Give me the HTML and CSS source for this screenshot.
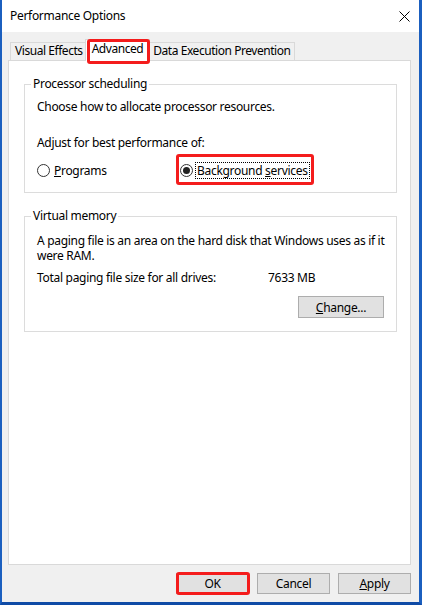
FILE: index.html
```html
<!DOCTYPE html>
<html>
<head>
<meta charset="utf-8">
<title>Performance Options</title>
<link rel="stylesheet" href="styles.css">
</head>
<body>
<div class="window">
  <div class="titlebar">
    <span class="title">Performance Options</span>
    <span class="close"><svg width="11" height="11" viewBox="0 0 11 11"><path d="M0.5 0.5L10.5 10.5M10.5 0.5L0.5 10.5" stroke="#000" stroke-width="1" fill="none"/></svg></span>
  </div>
  <div class="body">
    <div class="tabs">
      <div class="tab">Visual Effects</div>
      <div class="tab selected">Advanced<span class="mark mark-tab"></span></div>
      <div class="tab">Data Execution Prevention</div>
    </div>
    <div class="panel">
      <fieldset class="group g1">
        <legend>Processor scheduling</legend>
        <p class="line">Choose how to allocate processor resources.</p>
        <p class="line adjust">Adjust for best performance of:</p>
        <div class="radios">
          <div class="radio r-prog"><span class="circle"></span><span class="lbl"><u>P</u>rograms</span></div>
          <div class="radio r-bg"><span class="circle checked"></span><span class="lbl focus">Background <u>s</u>ervices</span><span class="mark mark-bg"></span></div>
        </div>
      </fieldset>
      <fieldset class="group g2">
        <legend>Virtual memory</legend>
        <p class="line">A paging file is an area on the hard disk that Windows uses as if it<br>were RAM.</p>
        <div class="total"><span class="total-label">Total paging file size for all drives:</span><span class="total-value">7633 MB</span></div>
        <div class="change-row"><button class="btn change"><u>C</u>hange...</button></div>
      </fieldset>
    </div>
    <div class="footer">
      <button class="btn ok">OK<span class="mark mark-ok"></span></button>
      <button class="btn">Cancel</button>
      <button class="btn"><u>A</u>pply</button>
    </div>
  </div>
</div>
</body>
</html>
```
FILE: styles.css
```css
html, body {
  margin: 0;
  padding: 0;
}
body {
  font-family: "Noto Sans", "Open Sans", sans-serif;
  font-size: 12px;
  letter-spacing: -0.3px;
  color: #000;
  background: #1b5fbf;
}
.window {
  width: 422px;
  height: 605px;
  box-sizing: border-box;
  border-left: 2px solid #1b5fbf;
  border-right: 3px solid #1b5fbf;
  border-bottom: 3px solid #0f4ba6;
  display: flex;
  flex-direction: column;
  background: #f0f0f0;
}
.titlebar {
  height: 32px;
  flex: none;
  background: #fff;
  display: flex;
  align-items: center;
  justify-content: space-between;
  padding: 0 9px 0 8px;
}
.title {
  line-height: 16px;
}
.close svg {
  display: block;
}
.body {
  flex: 1;
  display: flex;
  flex-direction: column;
  padding: 7px 8px 0 6px;
  min-height: 0;
}
.tabs {
  height: 21px;
  flex: none;
  display: flex;
  align-items: flex-end;
  padding-left: 2px;
  position: relative;
  z-index: 1;
}
.tab {
  height: 18px;
  box-sizing: border-box;
  border: 1px solid #d9d9d9;
  border-bottom: none;
  padding: 0 3px 0 4px;
  line-height: 16px;
  background: #f0f0f0;
  white-space: nowrap;
  letter-spacing: -0.45px;
}
.tab.selected {
  height: 22px;
  margin: 0 -2px -1px;
  padding: 0 6px;
  line-height: 18px;
  background: #fff;
  position: relative;
  z-index: 2;
}
.mark {
  position: absolute;
  box-sizing: border-box;
  border: 3px solid #f41c1c;
  border-radius: 3px;
  pointer-events: none;
}
.mark-tab {
  left: 1px;
  top: -1px;
  right: -1px;
  height: 25px;
}
.panel {
  flex: 1;
  background: #fff;
  border: 1px solid #d9d9d9;
  padding: 15px 0 0 15px;
  display: flex;
  flex-direction: column;
  min-height: 0;
}
.group {
  margin: 0;
  width: 373px;
  box-sizing: border-box;
  border: 1px solid #dcdcdc;
  padding: 7px 12px 11px 12px;
  min-width: 0;
}
.group legend {
  padding: 0 2px;
  margin-left: -6px;
  line-height: 16px;
}
.line {
  margin: 0;
  line-height: 15px;
  white-space: nowrap;
}
.adjust {
  margin-top: 21px;
}
.radios {
  margin-top: 10px;
  height: 21px;
  display: flex;
  align-items: center;
}
.radio {
  display: flex;
  align-items: center;
  gap: 2px;
  position: relative;
}
.r-prog {
  width: 143px;
}
.circle {
  width: 13px;
  height: 13px;
  box-sizing: border-box;
  border: 1px solid #333;
  border-radius: 50%;
  background: #fff;
  display: flex;
  align-items: center;
  justify-content: center;
}
.circle.checked::after {
  content: "";
  width: 7px;
  height: 7px;
  border-radius: 50%;
  background: #222;
}
.lbl {
  border: 1px dotted transparent;
  padding: 0 1px;
  line-height: 15px;
  white-space: nowrap;
}
.lbl.focus {
  border-color: #000;
}
.mark-bg {
  left: -4px;
  top: -8px;
  width: 138px;
  height: 31px;
}
.g2 {
  margin-top: 15px;
  padding: 9px 12px 13px 12px;
}
.total {
  margin-top: 7px;
  display: flex;
  line-height: 15px;
  white-space: nowrap;
}
.total-label {
  width: 231px;
}
.change-row {
  margin-top: 11px;
  display: flex;
  justify-content: flex-end;
}
.btn {
  font: inherit;
  letter-spacing: inherit;
  color: #000;
  width: 73px;
  height: 21px;
  padding: 0;
  border: 1px solid #adadad;
  background: #e1e1e1;
  box-sizing: border-box;
  line-height: 17px;
  position: relative;
}
.btn.change {
  width: 86px;
  height: 22px;
}
.footer {
  flex: none;
  display: flex;
  justify-content: flex-end;
  gap: 8px;
  padding: 8px 0;
}
.mark-ok {
  left: -1px;
  top: -2px;
  width: 74px;
  height: 23px;
}
```
